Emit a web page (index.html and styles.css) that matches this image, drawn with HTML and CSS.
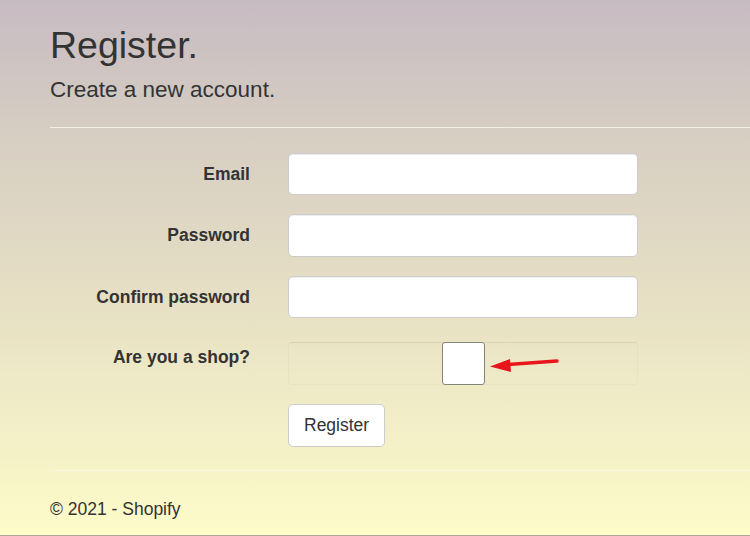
FILE: index.html
```html
<!DOCTYPE html>
<html lang="en">
  <head>
    <meta charset="UTF-8" />
    <meta name="viewport" content="width=device-width, initial-scale=1.0" />
    <title>Register - Shopify</title>
    <link rel="stylesheet" href="styles.css">
  </head>

  <body>
    <div class="page">
      <h2 class="title">Register.</h2>
      <h4 class="subtitle">Create a new account.</h4>
      <hr class="rule" />

      <form class="register-form">
        <div class="form-group">
          <label class="control-label" for="email">Email</label>
          <input class="form-control" id="email" type="email" />
        </div>
        <div class="form-group">
          <label class="control-label" for="password">Password</label>
          <input class="form-control" id="password" type="password" />
        </div>
        <div class="form-group">
          <label class="control-label" for="confirm">Confirm password</label>
          <input class="form-control" id="confirm" type="password" />
        </div>
        <div class="form-group">
          <label class="control-label control-label-shop" for="shop">Are you a shop?</label>
          <div class="check-box-wrap">
            <input class="check-box" id="shop" type="checkbox" />
            <svg class="arrow" width="80" height="20" viewBox="0 0 80 20">
              <path d="M18 8.5 L68 5" stroke="#e8161b" stroke-width="3.5" stroke-linecap="round" fill="none" />
              <polygon points="1,10.5 21,3 22,16" fill="#e8161b" />
            </svg>
          </div>
        </div>
        <div class="form-group">
          <span></span>
          <div>
            <button class="btn" type="submit">Register</button>
          </div>
        </div>
      </form>

      <hr class="rule rule-footer" />
      <footer class="footer">
        <p>&copy; 2021 - Shopify</p>
      </footer>
    </div>
  </body>
</html>
```

FILE: styles.css
```css
html {
  height: 100%;
}

body {
  margin: 0;
  padding: 0;
  min-height: 100%;
  box-sizing: border-box;
  background: linear-gradient(to bottom, #c7bbc2 0%, #d6cdc2 24%, #e6dfc4 55%, #f5f2c8 85%, #fefcc8 100%);
  border-bottom: 1px solid #aaa597;
  color: #333;
  font-family: "Liberation Sans", Arial, sans-serif;
  font-size: 17.5px;
  line-height: 25px;
}

.page {
  padding-left: 50px;
  padding-top: 25px;
}

.title {
  font-size: 37.5px;
  font-weight: normal;
  line-height: 1.1;
  margin: 0 0 11.5px;
}

.subtitle {
  font-size: 22.5px;
  font-weight: normal;
  line-height: 1.1;
  margin: 0;
}

.rule {
  border: 0;
  border-top: 1px solid #f3efe9;
  margin: 24px 0 25px;
}

.register-form {
  display: flex;
  flex-direction: column;
}

.form-group {
  display: grid;
  grid-template-columns: 200px 350px;
  column-gap: 38px;
  margin-bottom: 19px;
}

.control-label {
  font-weight: bold;
  text-align: right;
  padding-top: 9px;
}

.control-label-shop {
  padding-top: 8px;
}

.form-control {
  height: 42.5px;
  box-sizing: border-box;
  border: 1px solid #ccc;
  border-radius: 5px;
  background: #fff;
  box-shadow: inset 0 1px 1px rgba(0, 0, 0, 0.075);
  font-size: 17.5px;
  margin: 0;
}

.check-box-wrap {
  position: relative;
  height: 43px;
  margin-top: 5px;
  box-sizing: border-box;
  border: 1px solid rgba(120, 110, 80, 0.04);
  border-top-color: rgba(120, 110, 80, 0.14);
  border-radius: 4px;
  display: flex;
  justify-content: center;
  align-items: flex-start;
}

.check-box {
  appearance: none;
  -webkit-appearance: none;
  width: 43px;
  height: 43px;
  margin: -1px 0 0;
  box-sizing: border-box;
  background: #fff;
  border: 1px solid #858478;
  border-radius: 3px;
}

.arrow {
  position: absolute;
  left: 200px;
  top: 13px;
}

.btn {
  font-family: "Liberation Sans", Arial, sans-serif;
  font-size: 17.5px;
  line-height: 25px;
  color: #333;
  background: #fff;
  border: 1px solid #ccc;
  border-radius: 5px;
  padding: 8px 15px;
  cursor: pointer;
}

.rule-footer {
  margin: 4px 0 0;
  border-top-color: #f8f5e4;
}

.footer p {
  margin: 26px 0 0;
}
```
